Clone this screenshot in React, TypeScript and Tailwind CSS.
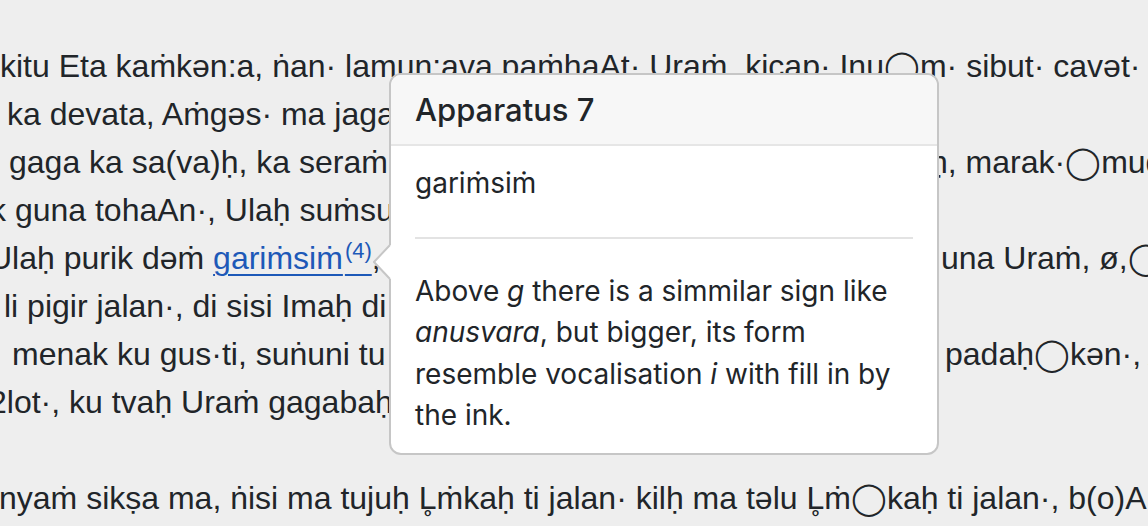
import React from 'react';

type Line = {
  left: React.ReactNode;
  offset: string;
  right?: string;
  rightOffset?: string;
};

const lines: Line[] = [
  { left: 'ka devata, Aṁgəs· ma jaga', offset: 'ml-[7px]' },
  { left: 'gaga ka sa(va)ḥ, ka seraṁ', offset: 'ml-[9px]', right: 'ṇ, marak·◯mud', rightOffset: '-ml-[10px]' },
  { left: 'k guna tohaAn·, Ulaḥ suṁsu', offset: '-ml-[10px]' },
  {
    left: (
      <>
        Ulaḥ purik dəṁ{' '}
        <a href="#" className="text-[#1d59b8] underline decoration-2 underline-offset-[5px]">
          gariṁsiṁ
          <sup className="text-[22px] ml-[2px]">(4)</sup>
        </a>
        ,
      </>
    ),
    offset: '-ml-[11px]',
    right: 'una Uraṁ, ø,◯',
    rightOffset: 'ml-[1px]',
  },
  { left: 'li pigir jalan·, di sisi Imaḥ di t', offset: 'ml-[4px]' },
  { left: 'menak ku gus·ti, suṅuni tu k', offset: 'ml-[12px]', right: 'padaḥ◯kən·, A', rightOffset: 'ml-[5px]' },
  { left: '2lot·, ku tvaḥ Uraṁ gagabaḥ', offset: '-ml-[11px]' },
];

function TextRow({ line }: { line: Line }) {
  return (
    <div className="flex h-12 whitespace-nowrap">
      <div className="w-[940px] shrink-0">
        <div className={line.offset}>{line.left}</div>
      </div>
      {line.right && <div className={line.rightOffset}>{line.right}</div>}
    </div>
  );
}

function Popover() {
  return (
    <div className="absolute left-[389px] top-[73px] w-[550px] rounded-[12px] border-2 border-[#c6c6c6] bg-white font-['Inter',sans-serif] text-[#212529]">
      <svg
        className="absolute left-[-18px] top-[169px]"
        width="20"
        height="36"
        viewBox="0 0 20 36"
      >
        <path d="M17 1 L1 18 L17 35 L20 35 L20 1 Z" fill="#ffffff" />
        <path d="M17 1 L1 18 L17 35" fill="none" stroke="#c6c6c6" strokeWidth="2" />
      </svg>
      <div className="rounded-t-[10px] border-b-2 border-[#e6e6e6] bg-[#f7f7f7] px-[24px] py-[16px] text-[31px] font-medium leading-[1.2]">
        Apparatus 7
      </div>
      <div className="px-[24px] pt-[17px] pb-[16px] text-[28px] leading-[41.5px]">
        <div>gariṁsiṁ</div>
        <hr className="my-[32px] border-0 h-[2px] bg-[#e3e3e3]" />
        <p>
          Above <i>g</i> there is a simmilar sign like <i>anusvara</i>, but bigger, its form resemble
          vocalisation <i>i</i> with fill in by the ink.
        </p>
      </div>
    </div>
  );
}

export default function App() {
  return (
    <div className="relative h-[526px] w-[1148px] overflow-hidden bg-[#eeeeee] font-['Liberation_Sans',Arial,sans-serif] text-[32px] leading-[48px] text-[#212529]">
      <div className="pt-[42px]">
        <div className="h-12 whitespace-nowrap">kitu Eta kaṁkən:a, ṅan· lamun:ava paṁhaAt· Uraṁ, kicap· Inu◯m· sibut· cavət· s</div>
        {lines.map((line, i) => (
          <TextRow key={i} line={line} />
        ))}
        <div className="h-12" />
        <div className="h-12 whitespace-nowrap -ml-[1px]">
          nyaṁ sikṣa ma, ṅisi ma tujuḥ L̥ṁkaḥ ti jalan· kilḥ ma təlu L̥ṁ◯kaḥ ti jalan·, b(o)A
        </div>
      </div>
      <Popover />
    </div>
  );
}
